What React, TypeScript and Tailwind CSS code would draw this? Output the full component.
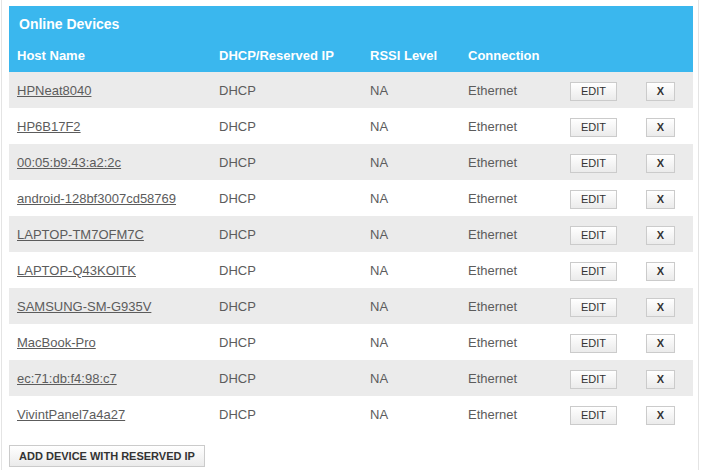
import React from "react";

type Device = { name: string };

const devices: Device[] = [
  { name: "HPNeat8040" },
  { name: "HP6B17F2" },
  { name: "00:05:b9:43:a2:2c" },
  { name: "android-128bf3007cd58769" },
  { name: "LAPTOP-TM7OFM7C" },
  { name: "LAPTOP-Q43KOITK" },
  { name: "SAMSUNG-SM-G935V" },
  { name: "MacBook-Pro" },
  { name: "ec:71:db:f4:98:c7" },
  { name: "VivintPanel7a4a27" },
];

const cols = "grid grid-cols-[202px_151px_98px_102px_76px_55px] items-center";
const btn =
  "h-[19px] border border-[#cbcbcb] bg-gradient-to-b from-white to-[#ebebeb] text-[11px] text-[#333] leading-none";

export default function App() {
  return (
    <div
      className="w-[702px] h-[470px] bg-white overflow-hidden"
      style={{ fontFamily: '"Liberation Sans", Arial, sans-serif' }}
    >
      <div className="ml-px w-[698px] h-full border-l border-r border-[#e4e4e4] pl-[7px] pr-[5px] pt-[6px]">
        {/* header */}
        <div className="bg-[#3ab7ee] text-white font-bold">
          <div className="h-[34px] flex items-center pl-[10px] pt-[2px] text-[14px]">
            Online Devices
          </div>
          <div className={`${cols} h-[32px] text-[13px]`}>
            <div className="pl-[8px]">Host Name</div>
            <div className="pl-[8px]">DHCP/Reserved IP</div>
            <div className="pl-[8px]">RSSI Level</div>
            <div className="pl-[8px]">Connection</div>
            <div />
            <div />
          </div>
        </div>

        {/* rows */}
        {devices.map((d, i) => (
          <div
            key={d.name}
            className={`${cols} h-[36px] text-[13px] text-[#5c5c5c] ${i % 2 === 0 ? "bg-[#ebebeb]" : "bg-white"}`}
          >
            <div className="pl-[8px] pt-px">
              <a href="#" className="underline text-[#5c5c5c]">
                {d.name}
              </a>
            </div>
            <div className="pl-[8px] pt-px">DHCP</div>
            <div className="pl-[8px] pt-px">NA</div>
            <div className="pl-[8px] pt-px">Ethernet</div>
            <div className="pl-[8px] pt-px">
              <button className={`${btn} w-[47px]`}>EDIT</button>
            </div>
            <div className="pl-[8px] pt-px">
              <button className={`${btn} w-[29px] font-bold`}>X</button>
            </div>
          </div>
        ))}

        <button className="mt-[13px] w-[196px] h-[22px] border border-[#cbcbcb] bg-gradient-to-b from-white to-[#ebebeb] text-[11px] text-[#333] font-bold">
          ADD DEVICE WITH RESERVED IP
        </button>
      </div>
    </div>
  );
}
